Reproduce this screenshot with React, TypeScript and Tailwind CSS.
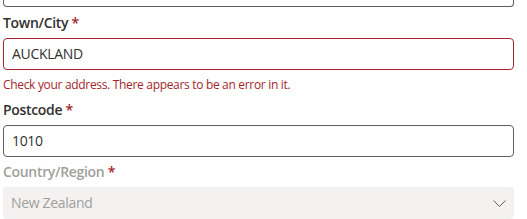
const FONT = "font-['Segoe_UI','Open_Sans','Noto_Sans',sans-serif] tracking-[-0.02em]"

function Label({ text, disabled }: { text: string; disabled?: boolean }) {
  return (
    <label
      className={`block py-[5px] text-sm leading-5 font-semibold ${
        disabled ? 'text-[#a19f9d]' : 'text-[#323130]'
      }`}
    >
      {text} <span className="text-[#a4262c]">*</span>
    </label>
  )
}

function Chevron() {
  return (
    <svg width="13" height="7" viewBox="0 0 13 7" fill="none" className="text-[#605e5c]">
      <path d="M0.5 0.5 L6.5 6.5 L12.5 0.5" stroke="currentColor" strokeWidth="1" />
    </svg>
  )
}

export default function App() {
  return (
    <div className={`${FONT} w-[527px] h-[219px] overflow-hidden bg-white pl-[3px] pr-[13px]`}>
      {/* tail of the field above, cut off by the viewport */}
      <div className="h-[7px] border-x border-b border-[#605e5c] rounded-b-sm" />

      <div className="mt-px">
        <Label text="Town/City" />
        <div className="h-8 flex items-center border border-[#a4262c] rounded-sm px-2 text-sm text-[#323130]">
          AUCKLAND
        </div>
        <p className="pt-[7px] text-xs leading-4 text-[#a4262c]">
          Check your address. There appears to be an error in it.
        </p>
      </div>

      <div className="mt-[2px]">
        <Label text="Postcode" />
        <div className="h-8 flex items-center border border-[#605e5c] rounded-sm px-2 text-sm text-[#323130]">
          1010
        </div>
      </div>

      <div>
        <Label text="Country/Region" disabled />
        <div className="h-8 flex items-center justify-between rounded-sm bg-[#f3f2f1] pl-2 pr-2 text-sm text-[#a19f9d]">
          <span>New Zealand</span>
          <Chevron />
        </div>
      </div>
    </div>
  )
}
